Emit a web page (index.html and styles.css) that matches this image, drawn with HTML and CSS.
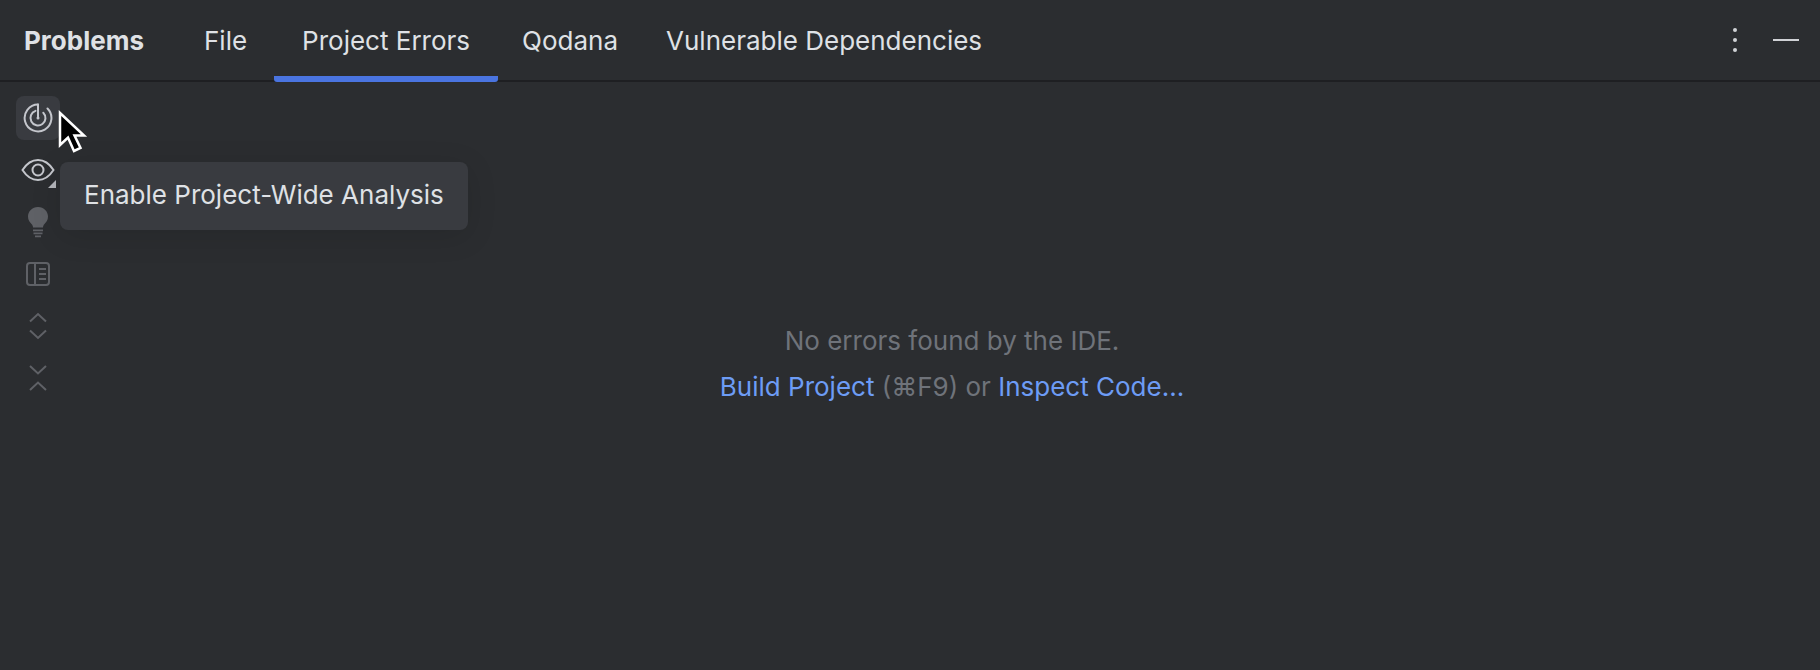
FILE: index.html
```html
<!DOCTYPE html>
<html lang="en">
  <head>
    <meta charset="UTF-8" />
    <title>Problems</title>
    <link rel="stylesheet" href="styles.css">
  </head>
  <body>
    <div id="panel">
      <div class="header">
        <div class="title">Problems</div>
        <div class="tabs">
          <div class="tab">File</div>
          <div class="tab active">Project Errors</div>
          <div class="tab">Qodana</div>
          <div class="tab">Vulnerable Dependencies</div>
        </div>
        <div class="actions">
          <svg class="dots" width="6" height="26" viewBox="0 0 6 26"><circle cx="3" cy="3" r="2"/><circle cx="3" cy="13" r="2"/><circle cx="3" cy="23" r="2"/></svg>
          <div class="minimize"></div>
        </div>
      </div>
      <div class="content">
        <div class="sidebar">
          <div class="tool hovered">
            <svg width="32" height="32" viewBox="0 0 32 32" fill="none" stroke="#c4c6cc" stroke-width="2" stroke-linecap="round">
              <path d="M25.500 6.500A13.400 13.400 0 1 1 16 2.600"/>
              <path d="M21.300 10.700A7.500 7.500 0 1 1 13.500 8.900"/>
              <path d="M16 2.600V16"/>
              <circle cx="16" cy="16" r="1.500" fill="#c4c6cc" stroke="none"/>
            </svg>
          </div>
          <div class="tool">
            <svg width="34" height="24" viewBox="0 0 34 24" fill="none" stroke="#c4c6cc" stroke-width="2">
              <path d="M1.500 12C6 5 11 2 17 2s11 3 15.500 10C28 19 23 22 17 22S6 19 1.500 12z"/>
              <circle cx="17" cy="12" r="5.500"/>
            </svg>
            <div class="corner"></div>
          </div>
          <div class="tool">
            <svg width="22" height="32" viewBox="0 0 22 32" fill="#5f6166">
              <path d="M11 1C5 1 1 5.500 1 10.500c0 3.500 1.800 5.800 3.500 7.500 1 1.100 1.500 2.200 1.500 3.500h10c0-1.300.5-2.400 1.500-3.500 1.700-1.700 3.500-4 3.500-7.500C21 5.500 17 1 11 1z"/>
              <path d="M6 23.500h10v1.800H6zM6.500 26.500h9v1.800h-9zM8 29.500h6v1.800H8z"/>
            </svg>
          </div>
          <div class="tool">
            <svg width="26" height="26" viewBox="0 0 26 26" fill="none" stroke="#5f6166" stroke-width="2">
              <rect x="2" y="2" width="22" height="22" rx="3"/>
              <path d="M10 2v22M14 8h7M14 13h7M14 18h7"/>
            </svg>
          </div>
          <div class="tool">
            <svg width="20" height="28" viewBox="0 0 20 28" fill="none" stroke="#5f6166" stroke-width="2">
              <path d="M2 9.500L10 2l8 7.500M2 18.500L10 26l8-7.500"/>
            </svg>
          </div>
          <div class="tool">
            <svg width="20" height="28" viewBox="0 0 20 28" fill="none" stroke="#5f6166" stroke-width="2">
              <path d="M2 2l8 7.500L18 2M2 26l8-7.500 8 7.500"/>
            </svg>
          </div>
        </div>
        <div class="empty">
          <div class="line">No errors found by the IDE.</div>
          <div class="line"><span class="link">Build Project</span> (⌘F9) or <span class="link">Inspect Code...</span></div>
        </div>
      </div>
      <div class="tooltip">Enable Project-Wide Analysis</div>
      <svg class="cursor" width="32" height="46" viewBox="0 0 32 46">
        <path d="M3 3V35L11 27.500 17 41 23.500 38 17.500 25.500H27Z" fill="#000" stroke="#fff" stroke-width="2.500"/>
      </svg>
    </div>
  </body>
</html>
```
FILE: styles.css
```css
body {
  margin: 0;
  padding: 0;
  background-color: #2b2d30;
  font-family: Inter, "Noto Sans", sans-serif;
  overflow: hidden;
}

#panel {
  width: 1820px;
  height: 670px;
  position: relative;
  display: flex;
  flex-direction: column;
}

.header {
  height: 80px;
  border-bottom: 2px solid #1e1f22;
  display: flex;
  align-items: stretch;
  flex-shrink: 0;
}

.title {
  margin-left: 24px;
  width: 156px;
  line-height: 81px;
  font-size: 26px;
  font-weight: 700;
  color: #dfe1e5;
}

.tabs {
  display: flex;
  flex: 1;
}

.tab {
  padding: 0 24px;
  height: 82px;
  line-height: 81px;
  font-size: 26px;
  color: #dfe1e5;
  box-sizing: border-box;
  border-bottom: 6px solid transparent;
}

.tab.active {
  margin-left: 3px;
  padding: 0 28px;
  border-bottom-color: #4a74e0;
  border-radius: 3px;
}

.actions {
  display: flex;
  align-items: center;
  gap: 35px;
  padding-right: 21px;
}

.dots {
  fill: #d0d2d6;
}

.minimize {
  width: 26px;
  height: 2px;
  background-color: #d0d2d6;
}

.content {
  flex: 1;
  display: flex;
}

.sidebar {
  width: 68px;
  padding: 14px 0 0 16px;
  display: flex;
  flex-direction: column;
  gap: 8px;
  flex-shrink: 0;
}

.tool {
  width: 44px;
  height: 44px;
  border-radius: 8px;
  display: flex;
  align-items: center;
  justify-content: center;
  position: relative;
}

.tool.hovered {
  background-color: #393b40;
}

.corner {
  position: absolute;
  right: 4px;
  bottom: 4px;
  width: 0;
  height: 0;
  border-left: 8px solid transparent;
  border-bottom: 8px solid #b4b6bb;
}

.empty {
  flex: 1;
  padding-top: 236px;
  text-align: center;
  font-size: 26px;
  line-height: 46px;
  color: #6f737a;
}

.link {
  color: #6d9cf5;
}

.tooltip {
  position: absolute;
  left: 60px;
  top: 162px;
  height: 68px;
  padding: 0 24px 0 24px;
  line-height: 66px;
  font-size: 26px;
  color: #dfe1e5;
  background-color: #393b40;
  border-radius: 8px;
  box-shadow: 0 6px 30px rgba(0, 0, 0, 0.12);
}

.cursor {
  position: absolute;
  left: 57px;
  top: 110px;
}
```
